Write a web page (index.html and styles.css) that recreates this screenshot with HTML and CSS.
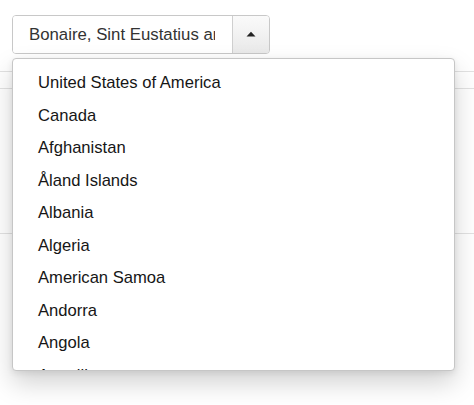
FILE: index.html
```html
<!DOCTYPE html>
<html>
<head>
<meta charset="utf-8">
<link rel="stylesheet" href="styles.css">
</head>
<body>
<div class="page">
  <div class="select">
    <div class="value"><span class="value-text">Bonaire, Sint Eustatius and Saba</span></div>
    <div class="toggle">
      <svg width="10" height="6" viewBox="0 0 10 6"><path d="M0.5 5.5 L5 0.8 L9.5 5.5 Z" fill="#222"/></svg>
    </div>
  </div>
  <div class="bg">
    <div class="bg-row"></div>
    <div class="bg-body">
      <div class="bg-field"></div>
    </div>
  </div>
  <ul class="menu">
    <li>United States of America</li>
    <li>Canada</li>
    <li>Afghanistan</li>
    <li>Åland Islands</li>
    <li>Albania</li>
    <li>Algeria</li>
    <li>American Samoa</li>
    <li>Andorra</li>
    <li>Angola</li>
    <li>Anguilla</li>
    <li>Antarctica</li>
  </ul>
</div>
</body>
</html>
```

FILE: styles.css
```css
html, body {
  margin: 0;
  padding: 0;
  background: #ffffff;
}
.page {
  position: relative;
  width: 474px;
  height: 405px;
  overflow: hidden;
  padding-top: 15px;
  box-sizing: border-box;
  font-family: "Liberation Sans", Arial, sans-serif;
}
.select {
  display: flex;
  margin-left: 12px;
  width: 258px;
  height: 39px;
  box-sizing: border-box;
  border: 1px solid #c8c8c8;
  border-radius: 4px;
  overflow: hidden;
}
.value {
  width: 219px;
  padding: 0 17px 0 16px;
  box-sizing: border-box;
  font-size: 16.8px;
  line-height: 37px;
  color: #333;
  background: #fff;
}
.value-text {
  display: block;
  white-space: nowrap;
  overflow: hidden;
}
.toggle {
  flex: 1;
  border-left: 1px solid #cfcfcf;
  background: linear-gradient(#fafafa, #e9e9e9);
  display: flex;
  align-items: center;
  justify-content: center;
  padding-bottom: 1px;
}
.toggle svg { display: block; }
.bg {
  margin-top: 17px;
  border-top: 1px solid #e2e2e2;
}
.bg-row {
  height: 16px;
  border-bottom: 1px solid #e2e2e2;
}
.bg-body {
  height: 145px;
  border-bottom: 1px solid #e2e2e2;
  padding-top: 68px;
  box-sizing: border-box;
}
.bg-field {
  margin-left: 12px;
  width: 200px;
  height: 50px;
  border-left: 1px solid #d8d8d8;
}
.menu {
  position: absolute;
  top: 58px;
  left: 12px;
  width: 443px;
  height: 313px;
  box-sizing: border-box;
  margin: 0;
  padding: 8px 0 0 0;
  list-style: none;
  background: #fff;
  border: 1px solid #c6c6c6;
  border-radius: 4px;
  overflow: hidden;
  box-shadow: 0 12px 26px rgba(0, 0, 0, 0.18), 0 2px 6px rgba(0, 0, 0, 0.08);
}
.menu li {
  height: 32.5px;
  line-height: 32.5px;
  padding-left: 25px;
  font-size: 16.6px;
  color: #161616;
  white-space: nowrap;
}
```
